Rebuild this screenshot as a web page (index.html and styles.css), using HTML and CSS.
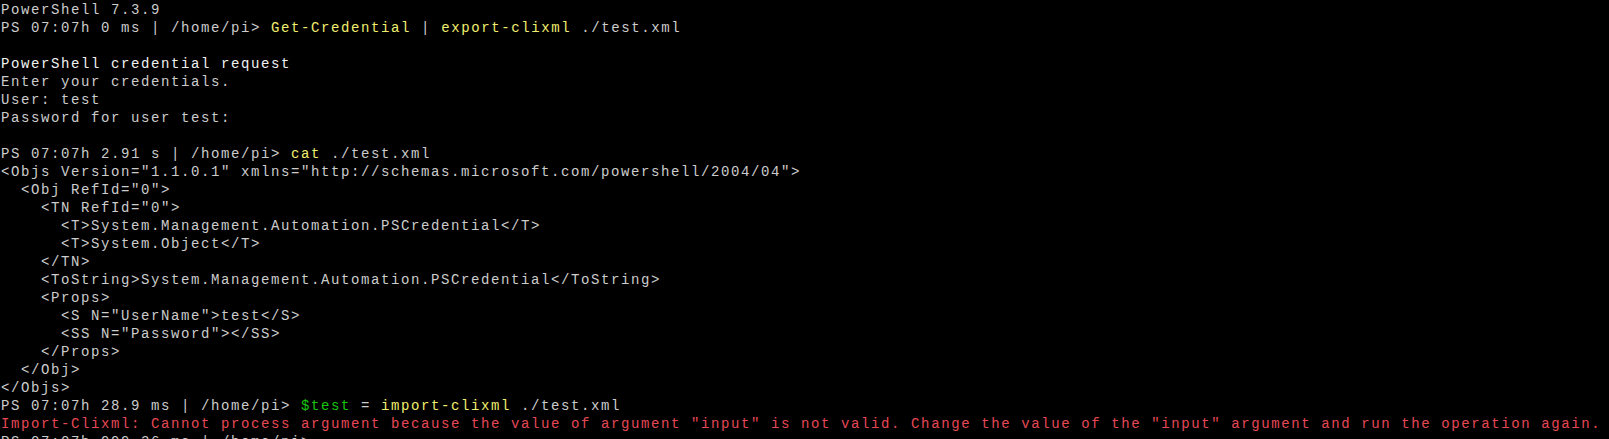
FILE: index.html
```html
<!DOCTYPE html>
<html>
<head>
<meta charset="utf-8">
<link rel="stylesheet" href="styles.css">
</head>
<body>
<div class="term">
<div class="line">PowerShell 7.3.9</div>
<div class="line">PS 07:07h 0 ms | /home/pi&gt; <span class="cmd">Get-Credential</span> <span class="pipe">|</span> <span class="cmd">export-clixml</span> ./test.xml</div>
<div class="line"> </div>
<div class="line bright">PowerShell credential request</div>
<div class="line">Enter your credentials.</div>
<div class="line">User: test</div>
<div class="line">Password for user test:</div>
<div class="line"> </div>
<div class="line">PS 07:07h 2.91 s | /home/pi&gt; <span class="cmd">cat</span> ./test.xml</div>
<div class="line">&lt;Objs Version="1.1.0.1" xmlns="http://schemas.microsoft.com/powershell/2004/04"&gt;</div>
<div class="line">  &lt;Obj RefId="0"&gt;</div>
<div class="line">    &lt;TN RefId="0"&gt;</div>
<div class="line">      &lt;T&gt;System.Management.Automation.PSCredential&lt;/T&gt;</div>
<div class="line">      &lt;T&gt;System.Object&lt;/T&gt;</div>
<div class="line">    &lt;/TN&gt;</div>
<div class="line">    &lt;ToString&gt;System.Management.Automation.PSCredential&lt;/ToString&gt;</div>
<div class="line">    &lt;Props&gt;</div>
<div class="line">      &lt;S N="UserName"&gt;test&lt;/S&gt;</div>
<div class="line">      &lt;SS N="Password"&gt;&lt;/SS&gt;</div>
<div class="line">    &lt;/Props&gt;</div>
<div class="line">  &lt;/Obj&gt;</div>
<div class="line">&lt;/Objs&gt;</div>
<div class="line">PS 07:07h 28.9 ms | /home/pi&gt; <span class="var">$test</span> = <span class="cmd">import-clixml</span> ./test.xml</div>
<div class="line err">Import-Clixml: Cannot process argument because the value of argument "input" is not valid. Change the value of the "input" argument and run the operation again.</div>
<div class="line">PS 07:07h 999.36 ms | /home/pi&gt;</div>
</div>
</body>
</html>
```
FILE: styles.css
```css
html, body {
  margin: 0;
  padding: 0;
  background: #000000;
}
.term {
  display: flex;
  flex-direction: column;
  padding: 1px 0 0 1px;
  font-family: "Liberation Mono", "Courier New", monospace;
  font-size: 14px;
  letter-spacing: 1.6px;
  line-height: 18px;
  color: #cccccc;
}
.line {
  height: 18px;
  white-space: pre;
}
.cmd {
  color: #f0ee6e;
}
.pipe {
  color: #cccccc;
}
.var {
  color: #16c60c;
}
.bright {
  color: #f2f2f2;
}
.err {
  color: #e74856;
}
```
